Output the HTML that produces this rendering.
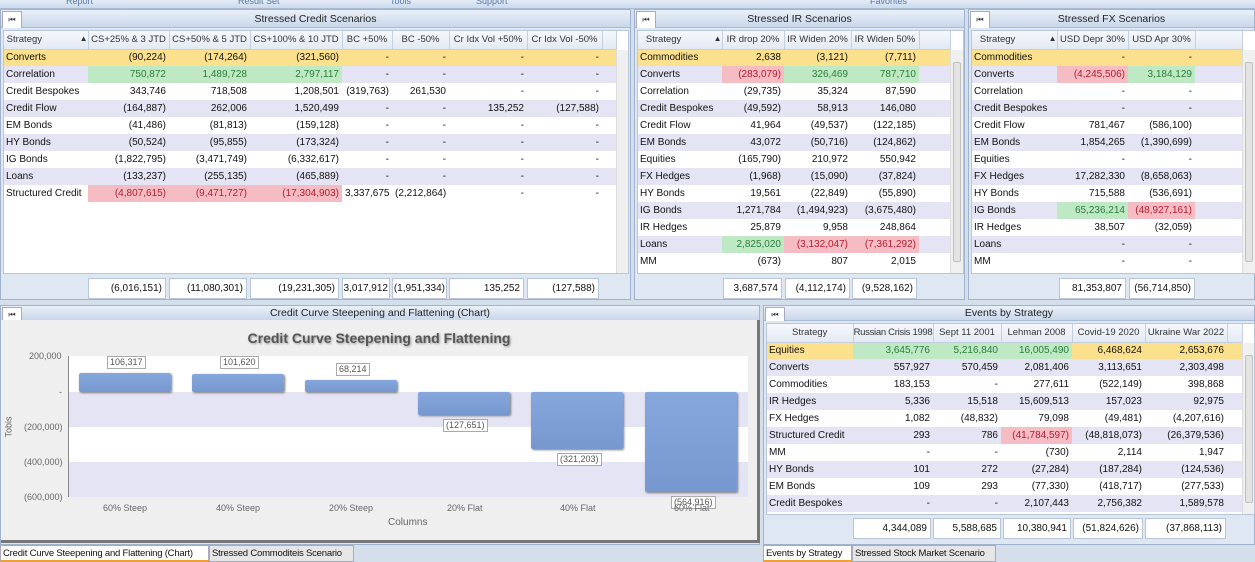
<!DOCTYPE html>
<html><head><meta charset="utf-8"><style>
*{box-sizing:border-box;margin:0;padding:0}
html,body{width:1255px;height:562px;overflow:hidden}
body{background:#d5dfec;font-family:"Liberation Sans",sans-serif;font-size:10px;color:#111;position:relative}
.abs{position:absolute}
.topbar{left:0;top:0;width:1255px;height:9px;background:linear-gradient(#e4ecf6,#cbd9ea);border-bottom:1px solid #a9bcd6;overflow:hidden}
.topbar span{position:absolute;top:-4px;color:#5577aa;font-size:9px}
.panel{background:#dfe7f2;border:1px solid #9fb3cf}
.hdr{position:absolute;left:0;right:0;top:0;height:18px;background:linear-gradient(#e9f0f8,#c9d7ea);border-bottom:1px solid #a9bcd6;text-align:center;line-height:18px;font-size:10.5px;color:#222}
.pin{position:absolute;left:1px;top:1px;width:20px;height:17px;background:#fff;border:1px solid #aab;border-bottom:none;font-size:8px;line-height:16px;text-align:center;color:#333}
.grid{position:absolute;background:#fff;border:1px solid #b8c6da;overflow:hidden}
table{border-collapse:collapse;table-layout:fixed}
td,th{height:17px;white-space:nowrap;overflow:hidden;padding:0 3px;font-weight:normal}
th{height:18px;background:linear-gradient(#f6f8fc,#e3e9f3);border-right:1px solid #c5cfdd;border-bottom:1px solid #c5cfdd;text-align:center;color:#333;font-size:9.5px;padding:0}
td{text-align:right}
td:first-child{text-align:left;padding-left:2px}
tr.y td{background:#fbe08e}
tr.l td{background:#e4e4f4}
tr.w td{background:#fff}
td.g{background:#bfe9c4!important;color:#2a7d3a}
td.r{background:#f6bcc3!important;color:#b02033}
.sb{position:absolute;width:13px;background:#f0f0f0;border-left:1px solid #ddd}
.sb i{position:absolute;left:2px;right:2px;background:#e3e3e3;border:1px solid #c0c0c0;border-radius:2px}
.tot{position:absolute;height:21px;background:#fff;border:1px solid #b8c6da;text-align:right;padding-right:3px;line-height:20px;white-space:nowrap;overflow:hidden}
.lbl{position:absolute;border:1px solid #aaa;background:#fff;font-size:9px;color:#555;padding:0 2px;line-height:11px}
.bar{position:absolute;background:linear-gradient(#86a7dc,#7698cf);border-radius:2px;box-shadow:1px 1px 2px #777}
.ax{position:absolute;font-size:9px;color:#666;white-space:nowrap}
.tab{position:absolute;height:17px;top:545px;font-size:9.5px;letter-spacing:-0.2px;line-height:16px;padding:0 2px;border:1px solid #aab;white-space:nowrap;overflow:hidden}
</style></head><body>
<div class="abs topbar"><span style="left:66px">Report</span><span style="left:238px">Result Set</span><span style="left:390px">Tools</span><span style="left:476px">Support</span><span style="left:870px">Favorites</span></div>

<div class="abs panel" style="left:0;top:9px;width:631px;height:291px">
<div class="hdr">Stressed Credit Scenarios</div><div class="pin">⏮</div>
<div class="grid" style="left:2px;top:20px;width:626px;height:244px">
<table style="width:612px"><colgroup><col style="width:84px"><col style="width:81px"><col style="width:81px"><col style="width:92px"><col style="width:50px"><col style="width:57px"><col style="width:78px"><col style="width:75px"><col style="width:14px"></colgroup>
<tr><th style="text-align:left">&nbsp;Strategy <span style="float:right;font-size:8px">▲</span></th><th>CS+25% &amp; 3 JTD</th><th>CS+50% &amp; 5 JTD</th><th>CS+100% &amp; 10 JTD</th><th>BC +50%</th><th>BC -50%</th><th>Cr Idx Vol +50%</th><th>Cr Idx Vol -50%</th><th></th></tr>
<tr class="y"><td>Converts</td><td>(90,224)</td><td>(174,264)</td><td>(321,560)</td><td>-</td><td>-</td><td>-</td><td>-</td><td></td></tr>
<tr class="l"><td>Correlation</td><td class="g">750,872</td><td class="g">1,489,728</td><td class="g">2,797,117</td><td>-</td><td>-</td><td>-</td><td>-</td><td></td></tr>
<tr class="w"><td>Credit Bespokes</td><td>343,746</td><td>718,508</td><td>1,208,501</td><td>(319,763)</td><td>261,530</td><td>-</td><td>-</td><td></td></tr>
<tr class="l"><td>Credit Flow</td><td>(164,887)</td><td>262,006</td><td>1,520,499</td><td>-</td><td>-</td><td>135,252</td><td>(127,588)</td><td></td></tr>
<tr class="w"><td>EM Bonds</td><td>(41,486)</td><td>(81,813)</td><td>(159,128)</td><td>-</td><td>-</td><td>-</td><td>-</td><td></td></tr>
<tr class="l"><td>HY Bonds</td><td>(50,524)</td><td>(95,855)</td><td>(173,324)</td><td>-</td><td>-</td><td>-</td><td>-</td><td></td></tr>
<tr class="w"><td>IG Bonds</td><td>(1,822,795)</td><td>(3,471,749)</td><td>(6,332,617)</td><td>-</td><td>-</td><td>-</td><td>-</td><td></td></tr>
<tr class="l"><td>Loans</td><td>(133,237)</td><td>(255,135)</td><td>(465,889)</td><td>-</td><td>-</td><td>-</td><td>-</td><td></td></tr>
<tr class="w"><td>Structured Credit</td><td class="r">(4,807,615)</td><td class="r">(9,471,727)</td><td class="r">(17,304,903)</td><td>3,337,675</td><td>(2,212,864)</td><td>-</td><td>-</td><td></td></tr>
</table>
<div class="sb" style="left:612px;top:19px;height:224px"></div>
</div>
<div class="tot" style="left:87px;top:268px;width:78px">(6,016,151)</div>
<div class="tot" style="left:168px;top:268px;width:78px">(11,080,301)</div>
<div class="tot" style="left:249px;top:268px;width:89px">(19,231,305)</div>
<div class="tot" style="left:341px;top:268px;width:48px;padding-right:1px">3,017,912</div>
<div class="tot" style="left:391px;top:268px;width:55px;padding-right:1px">(1,951,334)</div>
<div class="tot" style="left:448px;top:268px;width:75px">135,252</div>
<div class="tot" style="left:526px;top:268px;width:72px">(127,588)</div>
</div>

<div class="abs panel" style="left:634px;top:9px;width:331px;height:291px">
<div class="hdr">Stressed IR Scenarios</div><div class="pin">⏮</div>
<div class="grid" style="left:2px;top:20px;width:327px;height:244px">
<table style="width:312px"><colgroup><col style="width:84px"><col style="width:62px"><col style="width:67px"><col style="width:68px"><col style="width:31px"></colgroup>
<tr><th style="text-align:left">&nbsp;&nbsp;&nbsp;Strategy <span style="float:right;font-size:8px">▲</span></th><th>IR drop 20%</th><th>IR Widen 20%</th><th>IR Widen 50%</th><th></th></tr>
<tr class="y"><td>Commodities</td><td>2,638</td><td>(3,121)</td><td>(7,711)</td><td></td></tr>
<tr class="l"><td>Converts</td><td class="r">(283,079)</td><td class="g">326,469</td><td class="g">787,710</td><td></td></tr>
<tr class="w"><td>Correlation</td><td>(29,735)</td><td>35,324</td><td>87,590</td><td></td></tr>
<tr class="l"><td>Credit Bespokes</td><td>(49,592)</td><td>58,913</td><td>146,080</td><td></td></tr>
<tr class="w"><td>Credit Flow</td><td>41,964</td><td>(49,537)</td><td>(122,185)</td><td></td></tr>
<tr class="l"><td>EM Bonds</td><td>43,072</td><td>(50,716)</td><td>(124,862)</td><td></td></tr>
<tr class="w"><td>Equities</td><td>(165,790)</td><td>210,972</td><td>550,942</td><td></td></tr>
<tr class="l"><td>FX Hedges</td><td>(1,968)</td><td>(15,090)</td><td>(37,824)</td><td></td></tr>
<tr class="w"><td>HY Bonds</td><td>19,561</td><td>(22,849)</td><td>(55,890)</td><td></td></tr>
<tr class="l"><td>IG Bonds</td><td>1,271,784</td><td>(1,494,923)</td><td>(3,675,480)</td><td></td></tr>
<tr class="w"><td>IR Hedges</td><td>25,879</td><td>9,958</td><td>248,864</td><td></td></tr>
<tr class="l"><td>Loans</td><td class="g">2,825,020</td><td class="r">(3,132,047)</td><td class="r">(7,361,292)</td><td></td></tr>
<tr class="w"><td>MM</td><td>(673)</td><td>807</td><td>2,015</td><td></td></tr>
</table>
<div class="sb" style="left:312px;top:19px;height:224px"><i style="top:12px;height:200px"></i></div>
</div>
<div class="tot" style="left:88px;top:268px;width:59px">3,687,574</div>
<div class="tot" style="left:150px;top:268px;width:65px">(4,112,174)</div>
<div class="tot" style="left:217px;top:268px;width:65px">(9,528,162)</div>
</div>

<div class="abs panel" style="left:968px;top:9px;width:287px;height:291px">
<div class="hdr">Stressed FX Scenarios</div><div class="pin">⏮</div>
<div class="grid" style="left:2px;top:20px;width:285px;height:244px">
<table style="width:270px"><colgroup><col style="width:85px"><col style="width:71px"><col style="width:67px"><col style="width:47px"></colgroup>
<tr><th style="text-align:left">&nbsp;&nbsp;&nbsp;Strategy <span style="float:right;font-size:8px">▲</span></th><th>USD Depr 30%</th><th>USD Apr 30%</th><th></th></tr>
<tr class="y"><td>Commodities</td><td>-</td><td>-</td><td></td></tr>
<tr class="l"><td>Converts</td><td class="r">(4,245,506)</td><td class="g">3,184,129</td><td></td></tr>
<tr class="w"><td>Correlation</td><td>-</td><td>-</td><td></td></tr>
<tr class="l"><td>Credit Bespokes</td><td>-</td><td>-</td><td></td></tr>
<tr class="w"><td>Credit Flow</td><td>781,467</td><td>(586,100)</td><td></td></tr>
<tr class="l"><td>EM Bonds</td><td>1,854,265</td><td>(1,390,699)</td><td></td></tr>
<tr class="w"><td>Equities</td><td>-</td><td>-</td><td></td></tr>
<tr class="l"><td>FX Hedges</td><td>17,282,330</td><td>(8,658,063)</td><td></td></tr>
<tr class="w"><td>HY Bonds</td><td>715,588</td><td>(536,691)</td><td></td></tr>
<tr class="l"><td>IG Bonds</td><td class="g">65,236,214</td><td class="r">(48,927,161)</td><td></td></tr>
<tr class="w"><td>IR Hedges</td><td>38,507</td><td>(32,059)</td><td></td></tr>
<tr class="l"><td>Loans</td><td>-</td><td>-</td><td></td></tr>
<tr class="w"><td>MM</td><td>-</td><td>-</td><td></td></tr>
</table>
<div class="sb" style="left:270px;top:19px;height:224px"><i style="top:12px;height:200px"></i></div>
</div>
<div class="tot" style="left:90px;top:268px;width:67px">81,353,807</div>
<div class="tot" style="left:160px;top:268px;width:66px">(56,714,850)</div>
</div>

<div class="abs panel" style="left:0;top:305px;width:760px;height:240px">
<div class="hdr" style="height:15px;line-height:15px">Credit Curve Steepening and Flattening (Chart)</div><div class="pin" style="height:14px;line-height:13px">⏮</div>
<div class="abs" style="left:0;top:14px;width:759px;height:223px;background:#efefef;border-bottom:3px solid #777;border-right:3px solid #777">
<div class="abs" style="left:0;right:0;top:10px;text-align:center;font-weight:bold;font-size:14px;color:#555;text-shadow:1px 1px 2px #999">Credit Curve Steepening and Flattening</div>
</div>
</div>
<div class="abs" style="left:68px;top:356px;width:680px;height:141px;border-left:1px solid #888;border-bottom:1px solid #888">
<div class="abs" style="left:0;top:0;width:100%;height:36px;background:#fff"></div>
<div class="abs" style="left:0;top:36px;width:100%;height:35px;background:#e4e4f4"></div>
<div class="abs" style="left:0;top:71px;width:100%;height:35px;background:#fff"></div>
<div class="abs" style="left:0;top:106px;width:100%;height:35px;background:#e4e4f4"></div>
</div>
<div class="ax" style="left:29px;top:351px">200,000</div>
<div class="ax" style="left:59px;top:387px">-</div>
<div class="ax" style="left:24px;top:422px">(200,000)</div>
<div class="ax" style="left:24px;top:457px">(400,000)</div>
<div class="ax" style="left:24px;top:492px">(600,000)</div>
<div class="ax" style="left:-2px;top:422px;transform:rotate(-90deg)">Tobis</div>
<div class="bar" style="left:79px;top:373px;width:92px;height:19px"></div>
<div class="bar" style="left:192px;top:374px;width:92px;height:18px"></div>
<div class="bar" style="left:305px;top:380px;width:92px;height:12px"></div>
<div class="bar" style="left:418px;top:392px;width:92px;height:23px"></div>
<div class="bar" style="left:531px;top:392px;width:92px;height:57px"></div>
<div class="bar" style="left:645px;top:392px;width:92px;height:100px"></div>
<div class="lbl" style="left:107px;top:356px">106,317</div>
<div class="lbl" style="left:220px;top:356px">101,620</div>
<div class="lbl" style="left:336px;top:363px">68,214</div>
<div class="lbl" style="left:443px;top:419px">(127,651)</div>
<div class="lbl" style="left:557px;top:453px">(321,203)</div>
<div class="lbl" style="left:671px;top:496px">(564,916)</div>
<div class="ax" style="left:103px;top:503px">60% Steep</div>
<div class="ax" style="left:216px;top:503px">40% Steep</div>
<div class="ax" style="left:329px;top:503px">20% Steep</div>
<div class="ax" style="left:447px;top:503px">20% Flat</div>
<div class="ax" style="left:560px;top:503px">40% Flat</div>
<div class="ax" style="left:674px;top:503px">60% Flat</div>
<div class="ax" style="left:388px;top:517px;font-size:10px">Columns</div>
<div class="tab" style="left:0;width:209px;background:#fff;border-bottom:2px solid #f0a030">Credit Curve Steepening and Flattening (Chart)</div>
<div class="tab" style="left:209px;width:145px;background:#e6e6e6">Stressed Commoditeis Scenario</div>

<div class="abs panel" style="left:763px;top:305px;width:492px;height:240px">
<div class="hdr" style="height:15px;line-height:15px">Events by Strategy</div><div class="pin" style="height:14px;line-height:13px">⏮</div>
<div class="grid" style="left:2px;top:17px;width:489px;height:192px">
<table style="width:475px"><colgroup><col style="width:86px"><col style="width:80px"><col style="width:68px"><col style="width:71px"><col style="width:73px"><col style="width:82px"><col style="width:15px"></colgroup>
<tr><th>Strategy</th><th style="letter-spacing:-0.3px">Russian Crisis 1998</th><th>Sept 11 2001</th><th>Lehman 2008</th><th>Covid-19 2020</th><th>Ukraine War 2022</th><th></th></tr>
<tr class="y"><td>Equities</td><td class="g">3,645,776</td><td class="g">5,216,840</td><td class="g">16,005,490</td><td>6,468,624</td><td>2,653,676</td><td></td></tr>
<tr class="l"><td>Converts</td><td>557,927</td><td>570,459</td><td>2,081,406</td><td>3,113,651</td><td>2,303,498</td><td></td></tr>
<tr class="w"><td>Commodities</td><td>183,153</td><td>-</td><td>277,611</td><td>(522,149)</td><td>398,868</td><td></td></tr>
<tr class="l"><td>IR Hedges</td><td>5,336</td><td>15,518</td><td>15,609,513</td><td>157,023</td><td>92,975</td><td></td></tr>
<tr class="w"><td>FX Hedges</td><td>1,082</td><td>(48,832)</td><td>79,098</td><td>(49,481)</td><td>(4,207,616)</td><td></td></tr>
<tr class="l"><td>Structured Credit</td><td>293</td><td>786</td><td class="r">(41,784,597)</td><td>(48,818,073)</td><td>(26,379,536)</td><td></td></tr>
<tr class="w"><td>MM</td><td>-</td><td>-</td><td>(730)</td><td>2,114</td><td>1,947</td><td></td></tr>
<tr class="l"><td>HY Bonds</td><td>101</td><td>272</td><td>(27,284)</td><td>(187,284)</td><td>(124,536)</td><td></td></tr>
<tr class="w"><td>EM Bonds</td><td>109</td><td>293</td><td>(77,330)</td><td>(418,717)</td><td>(277,533)</td><td></td></tr>
<tr class="l"><td>Credit Bespokes</td><td>-</td><td>-</td><td>2,107,443</td><td>2,756,382</td><td>1,589,578</td><td></td></tr>
</table>
<div class="sb" style="left:475px;top:19px;height:172px"><i style="top:12px;height:148px"></i></div>
</div>
<div class="tot" style="left:89px;top:212px;width:78px">4,344,089</div>
<div class="tot" style="left:169px;top:212px;width:68px">5,588,685</div>
<div class="tot" style="left:239px;top:212px;width:68px">10,380,941</div>
<div class="tot" style="left:309px;top:212px;width:70px">(51,824,626)</div>
<div class="tot" style="left:381px;top:212px;width:81px">(37,868,113)</div>
</div>
<div class="tab" style="left:763px;width:89px;background:#fff;border-bottom:2px solid #f0a030">Events by Strategy</div>
<div class="tab" style="left:852px;width:144px;background:#e6e6e6">Stressed Stock Market Scenario</div>
</body></html>
